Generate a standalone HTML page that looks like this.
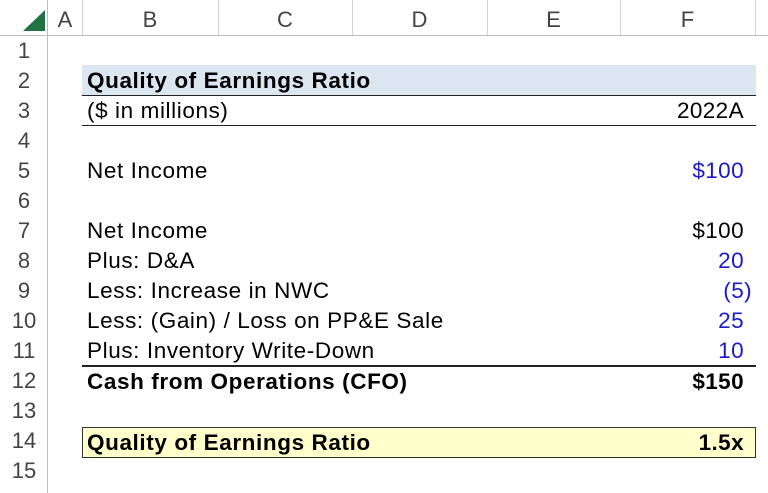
<!DOCTYPE html><html><head><style>
body{margin:0;width:768px;height:493px;overflow:hidden;background:#fff;font-family:"Liberation Sans",Arial,sans-serif;position:relative}
.h{position:absolute;top:0;height:35px;line-height:40px;font-size:22px;color:#444;text-align:center}
.r{position:absolute;left:0;width:48px;height:30px;line-height:32px;font-size:22px;color:#444;text-align:center}
.t{position:absolute;left:87px;font-size:22.5px;letter-spacing:0.6px;height:30px;line-height:32px;color:#000;white-space:nowrap}
.v{position:absolute;right:24px;font-size:22.5px;letter-spacing:0.4px;height:30px;line-height:32px;color:#000;text-align:right}
.b{color:#1a1acc}
.bd{font-weight:bold}
.vl{position:absolute;top:0;height:35px;width:1px;background:#d4d4d4}
</style></head><body>
<div style="position:absolute;left:0;top:35px;width:768px;height:1px;background:#bdbdbd"></div>
<div style="position:absolute;left:47px;top:0;width:1px;height:493px;background:#bdbdbd"></div>
<div class="vl" style="left:82px"></div><div class="vl" style="left:218px"></div><div class="vl" style="left:352px"></div><div class="vl" style="left:487px"></div><div class="vl" style="left:620px"></div><div class="vl" style="left:755px"></div>
<svg style="position:absolute;left:22px;top:10px" width="24" height="22"><polygon points="23,0 23,21 1,21" fill="#217346"/></svg>
<div class="h" style="left:48px;width:34px">A</div><div class="h" style="left:82px;width:136px">B</div><div class="h" style="left:218px;width:134px">C</div><div class="h" style="left:352px;width:135px">D</div><div class="h" style="left:487px;width:133px">E</div><div class="h" style="left:620px;width:135px">F</div>
<div class="r" style="top:35px">1</div><div class="r" style="top:65px">2</div><div class="r" style="top:95px">3</div><div class="r" style="top:125px">4</div><div class="r" style="top:155px">5</div><div class="r" style="top:185px">6</div><div class="r" style="top:215px">7</div><div class="r" style="top:245px">8</div><div class="r" style="top:275px">9</div><div class="r" style="top:305px">10</div><div class="r" style="top:335px">11</div><div class="r" style="top:365px">12</div><div class="r" style="top:395px">13</div><div class="r" style="top:425px">14</div><div class="r" style="top:455px">15</div>
<div style="position:absolute;left:82px;top:65px;width:674px;height:30px;background:#dce6f1"></div>
<div style="position:absolute;left:82px;top:95px;width:674px;height:1px;background:#222"></div>
<div style="position:absolute;left:82px;top:125px;width:674px;height:1px;background:#222"></div>
<div style="position:absolute;left:82px;top:365px;width:674px;height:2px;background:#222"></div>
<div style="position:absolute;left:82px;top:427px;width:672px;height:29px;background:#ffffcc;border:1px solid #333"></div>
<div class="t bd" style="top:65px">Quality of Earnings Ratio</div>
<div class="t" style="top:95px">($ in millions)</div><div class="v" style="top:95px">2022A</div>
<div class="t" style="top:155px">Net Income</div><div class="v b" style="top:155px">$100</div>
<div class="t" style="top:215px">Net Income</div><div class="v" style="top:215px">$100</div>
<div class="t" style="top:245px">Plus: D&amp;A</div><div class="v b" style="top:245px">20</div>
<div class="t" style="top:275px">Less: Increase in NWC</div><div class="v b" style="top:275px;right:16px">(5)</div>
<div class="t" style="top:305px">Less: (Gain) / Loss on PP&amp;E Sale</div><div class="v b" style="top:305px">25</div>
<div class="t" style="top:335px">Plus: Inventory Write-Down</div><div class="v b" style="top:335px">10</div>
<div class="t bd" style="top:366px">Cash from Operations (CFO)</div><div class="v bd" style="top:366px">$150</div>
<div class="t bd" style="top:427px">Quality of Earnings Ratio</div><div class="v bd" style="top:427px">1.5x</div>
</body></html>
